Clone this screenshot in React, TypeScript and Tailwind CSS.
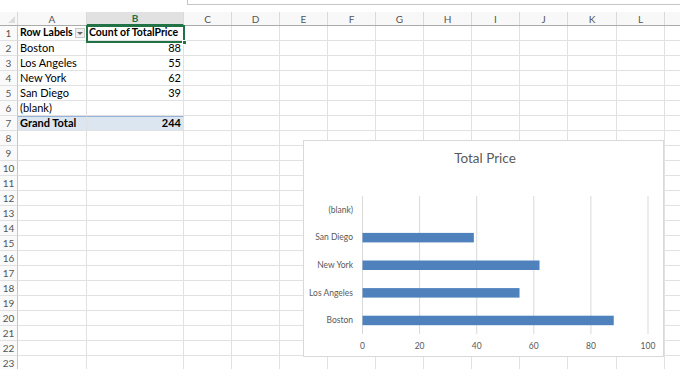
const COLS = [
  { name: "A", w: 69 },
  { name: "B", w: 97 },
  { name: "C", w: 48 },
  { name: "D", w: 48 },
  { name: "E", w: 48 },
  { name: "F", w: 48 },
  { name: "G", w: 48 },
  { name: "H", w: 48 },
  { name: "I", w: 48 },
  { name: "J", w: 48 },
  { name: "K", w: 49 },
  { name: "L", w: 48 },
]

const pivot: Record<number, [string, string]> = {
  2: ["Boston", "88"],
  3: ["Los Angeles", "55"],
  4: ["New York", "62"],
  5: ["San Diego", "39"],
  6: ["(blank)", ""],
}

const chartData = [
  { label: "(blank)", value: 0 },
  { label: "San Diego", value: 39 },
  { label: "New York", value: 62 },
  { label: "Los Angeles", value: 55 },
  { label: "Boston", value: 88 },
]

function ColumnHeader() {
  return (
    <div className="flex h-[14px] border-b border-[#ababab] bg-[#f8f8f8]">
      <div className="w-[18px] shrink-0 border-r border-[#dadada] relative">
        <div className="absolute right-[2px] bottom-[2px] w-0 h-0 border-l-[7px] border-l-transparent border-b-[7px] border-b-[#dcdcdc]" />
      </div>
      {COLS.map((c) => (
        <div
          key={c.name}
          style={{ width: c.w }}
          className={`shrink-0 flex items-center justify-center border-r border-[#dadada] text-[10px] leading-none ${
            c.name === "B"
              ? "bg-[#e1e1e1] text-[#217346] font-bold border-b-2 border-b-[#217346] -mb-px"
              : "text-[#555]"
          }`}
        >
          {c.name}
        </div>
      ))}
      <div className="flex-1" />
    </div>
  )
}

function Row({ n }: { n: number }) {
  const total = n === 7
  const header = n === 1
  const data = pivot[n]
  return (
    <div className="flex h-[15px]">
      <div className="w-[18px] shrink-0 flex items-center justify-center text-[10px] text-[#555] border-r border-[#c6c6c6] border-b border-b-[#e1e1e1] bg-[#fafafa]">
        {n}
      </div>
      {COLS.map((c, i) => {
        let content: React.ReactNode = null
        let extra = ""
        if (total && i < 2) extra = "bg-[#dce6f1] border-t border-t-[#95b3d7]"
        if (header && i === 0)
          content = (
            <div className="flex w-full items-center justify-between pl-[2px] pr-[1px]">
              <span className="font-bold text-[10.5px]">Row Labels</span>
              <span className="w-[10px] h-[10px] bg-[#f0f0f0] border border-[#c8c8c8] flex items-center justify-center">
                <span className="w-0 h-0 border-l-[3px] border-r-[3px] border-t-[3px] border-l-transparent border-r-transparent border-t-[#666]" />
              </span>
            </div>
          )
        if (header && i === 1)
          content = <span className="font-bold pl-[2px] text-[10.5px]">Count of TotalPrice</span>
        if (data && i === 0) content = <span className="pl-[2px]">{data[0]}</span>
        if (data && i === 1)
          content = <span className="w-full text-right pr-[2px]">{data[1]}</span>
        if (total && i === 0) content = <span className="font-bold pl-[2px]">Grand Total</span>
        if (total && i === 1)
          content = <span className="w-full text-right pr-[2px] font-bold">244</span>
        return (
          <div
            key={c.name}
            style={{ width: c.w }}
            className={`shrink-0 flex items-center border-r border-b border-[#e1e1e1] text-[11px] text-black whitespace-nowrap overflow-hidden relative ${extra}`}
          >
            {content}
          </div>
        )
      })}
      <div className="flex-1 border-b border-[#e1e1e1]" />
    </div>
  )
}

function Chart() {
  const x0 = 58.5
  const unit = 2.855
  const top = 55
  const band = 27.6
  return (
    <div className="absolute left-[303px] top-[140px] w-[361px] h-[217px] bg-white border border-[#d9d9d9]">
      <svg width="361" height="217" className="block">
        <text x="181" y="22" textAnchor="middle" fontSize="13.5" fill="#595959" fontFamily="Lato, 'Open Sans', sans-serif">
          Total Price
        </text>
        {[0, 20, 40, 60, 80, 100].map((v) => {
          const x = x0 + v * unit
          return (
            <g key={v}>
              <line x1={x} x2={x} y1={top} y2={top + 138} stroke="#d9d9d9" strokeWidth="1" />
              <text x={x} y={208} textAnchor="middle" fontSize="8.5" fill="#595959" fontFamily="Lato, 'Open Sans', sans-serif">
                {v}
              </text>
            </g>
          )
        })}
        {chartData.map((d, i) => {
          const cy = top + band * i + band / 2
          return (
            <g key={d.label}>
              <text x={49} y={cy + 3} textAnchor="end" fontSize="8.5" fill="#595959" fontFamily="Lato, 'Open Sans', sans-serif">
                {d.label}
              </text>
              {d.value > 0 && (
                <rect x={x0} y={cy - 4.5} width={d.value * unit} height={9.5} fill="#4f81bd" />
              )}
            </g>
          )
        })}
      </svg>
    </div>
  )
}

export default function App() {
  const rows = Array.from({ length: 23 }, (_, i) => i + 1)
  return (
    <div
      className="relative w-[680px] h-[369px] overflow-hidden bg-white"
      style={{ fontFamily: "Lato, 'Open Sans', sans-serif" }}
    >
      <div className="h-[12px] relative">
        <div className="absolute left-[187px] right-0 top-0 h-[5px] border-l border-b border-[#c6c6c6]" />
      </div>
      <ColumnHeader />
      {rows.map((n) => (
        <Row key={n} n={n} />
      ))}
      {/* selected cell B1 */}
      <div className="absolute left-[86px] top-[25px] w-[99px] h-[18px] border-2 border-[#217346] pointer-events-none">
        <div className="absolute -right-[4px] -bottom-[4px] w-[5px] h-[5px] bg-[#217346] border border-white" />
      </div>
      <Chart />
    </div>
  )
}
